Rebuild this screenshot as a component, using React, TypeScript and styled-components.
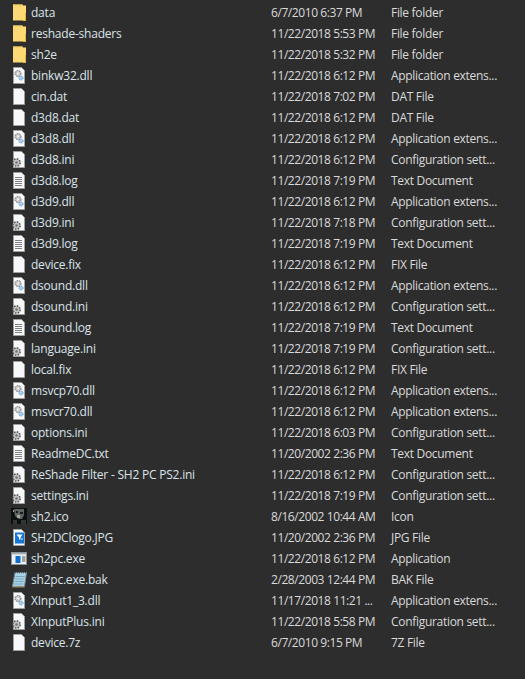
import { createGlobalStyle } from 'styled-components'
import styled from 'styled-components'

const GlobalStyle = createGlobalStyle`
  html, body {
    margin: 0;
    padding: 0;
    background: #2d2d2d;
  }
`

const List = styled.div`
  width: 525px;
  height: 679px;
  padding-top: 2px;
  box-sizing: border-box;
  background: #2d2d2d;
  overflow: hidden;
  font-family: 'Open Sans', 'Noto Sans', sans-serif;
  font-size: 12px;
  color: #dcdcdc;
`

const Row = styled.div`
  display: grid;
  grid-template-columns: 271px 120px 1fr;
  height: 21px;
  align-items: center;
  white-space: nowrap;
`

const NameCell = styled.div`
  display: flex;
  align-items: center;
  padding-left: 11px;
`

const IconBox = styled.div`
  width: 20px;
  height: 18px;
  flex: none;
  svg {
    display: block;
  }
`

const Name = styled.span`
  color: #dbe3ea;
  letter-spacing: -0.22px;
`

const Detail = styled.div<{ $spacing: string }>`
  color: #dadada;
  letter-spacing: ${(p) => p.$spacing};
`

type Kind = 'folder' | 'blank' | 'dll' | 'ini' | 'log' | 'ico' | 'jpg' | 'exe' | 'bak'

const Page = () => <path d="M2.5 .5h8l3 3v13h-11z" fill="#f7f8fa" stroke="#a0a0a0" strokeWidth="1" />

function FileIcon({ kind }: { kind: Kind }) {
  return (
    <svg width="18" height="18" viewBox="0 0 18 18">
      {kind === 'folder' && (
        <>
          <path d="M2 .5h9.5l.5 1h3v15H2z" fill="#fdd976" />
          <path d="M15 9v8h-3v-1h2V9z" fill="#e3b23a" />
          <path d="M2 .5h9.5v1H2z" fill="#efc65c" />
        </>
      )}
      {kind === 'blank' && <Page />}
      {kind === 'dll' && (
        <>
          <Page />
          <circle cx="7" cy="6.5" r="3" fill="#c8c8c8" stroke="#6f6f6f" strokeDasharray="1.5 1" />
          <circle cx="7" cy="6.5" r="1" fill="#f7f8fa" />
          <circle cx="10" cy="11" r="2" fill="#a8d0ee" stroke="#5b9bd0" strokeDasharray="1.2 .8" />
        </>
      )}
      {kind === 'ini' && (
        <>
          <Page />
          <circle cx="5.5" cy="11.5" r="3.6" fill="#c4c4c4" stroke="#5a5a5a" strokeWidth="1.6" strokeDasharray="1.6 1.2" />
          <circle cx="5.5" cy="11.5" r="1.2" fill="#6e6e6e" />
        </>
      )}
      {kind === 'log' && (
        <>
          <Page />
          <path d="M4 5.5h7M4 7.5h7M4 9.5h7M4 11.5h7M4 13.5h7" stroke="#7f7f7f" strokeWidth="1" />
        </>
      )}
      {kind === 'ico' && (
        <>
          <rect x="0" y="0" width="16" height="16" fill="#0c0f10" />
          <path d="M3 1h10v6l-2 4H8L4 8z" fill="#5d6461" />
          <path d="M5 3h2v2H5zM9 4h3v2H9z" fill="#1a1d1c" />
          <path d="M6 7h3v3H6zM2 2h1v2H2z" fill="#a4a8a4" />
          <path d="M2 12h4v4H2zM10 12h5v4h-5z" fill="#323633" />
        </>
      )}
      {kind === 'jpg' && (
        <>
          <Page />
          <rect x="4" y="3.5" width="9" height="11" fill="#1277d6" />
          <path d="M5.5 5.5h6L9.5 8.5v2h-1.5V8.5z" fill="#fff" />
          <circle cx="11" cy="10" r=".8" fill="#fff" />
        </>
      )}
      {kind === 'exe' && (
        <>
          <rect x=".5" y="2.5" width="15" height="12" fill="#eef1f4" stroke="#8d9298" strokeWidth="1" />
          <path d="M1 3h14v1.5H1z" fill="#a9b4bf" />
          <rect x="4.5" y="6" width="5" height="7" fill="#0f6fd0" />
          <path d="M11 7h3.5M11 9h3.5M11 11h3.5" stroke="#555" strokeWidth="1" />
        </>
      )}
      {kind === 'bak' && (
        <>
          <path d="M4 1.5h11.5l-2 14H1.5z" fill="#a9d3e6" stroke="#6f8a96" strokeWidth="1" />
          <path d="M4.5 5.5h9M4 8h9M3.6 10.5h9M3.2 13h9" stroke="#7fa7bb" strokeWidth="1" />
          <path d="M4 1.5h11" stroke="#3d4b52" strokeWidth="1.4" strokeDasharray="1 1" />
          <path d="M1.5 16h12" stroke="#a88f5a" strokeWidth="1" />
        </>
      )}
    </svg>
  )
}

const APP = 'Application extens...'
const CONF = 'Configuration sett...'
const TXT = 'Text Document'

const files: [string, Kind, string, string][] = [
  ['data', 'folder', '6/7/2010 6:37 PM', 'File folder'],
  ['reshade-shaders', 'folder', '11/22/2018 5:53 PM', 'File folder'],
  ['sh2e', 'folder', '11/22/2018 5:32 PM', 'File folder'],
  ['binkw32.dll', 'dll', '11/22/2018 6:12 PM', APP],
  ['cin.dat', 'blank', '11/22/2018 7:02 PM', 'DAT File'],
  ['d3d8.dat', 'blank', '11/22/2018 6:12 PM', 'DAT File'],
  ['d3d8.dll', 'dll', '11/22/2018 6:12 PM', APP],
  ['d3d8.ini', 'ini', '11/22/2018 6:12 PM', CONF],
  ['d3d8.log', 'log', '11/22/2018 7:19 PM', TXT],
  ['d3d9.dll', 'dll', '11/22/2018 6:12 PM', APP],
  ['d3d9.ini', 'ini', '11/22/2018 7:18 PM', CONF],
  ['d3d9.log', 'log', '11/22/2018 7:19 PM', TXT],
  ['device.fix', 'blank', '11/22/2018 6:12 PM', 'FIX File'],
  ['dsound.dll', 'dll', '11/22/2018 6:12 PM', APP],
  ['dsound.ini', 'ini', '11/22/2018 6:12 PM', CONF],
  ['dsound.log', 'log', '11/22/2018 7:19 PM', TXT],
  ['language.ini', 'ini', '11/22/2018 7:19 PM', CONF],
  ['local.fix', 'blank', '11/22/2018 6:12 PM', 'FIX File'],
  ['msvcp70.dll', 'dll', '11/22/2018 6:12 PM', APP],
  ['msvcr70.dll', 'dll', '11/22/2018 6:12 PM', APP],
  ['options.ini', 'ini', '11/22/2018 6:03 PM', CONF],
  ['ReadmeDC.txt', 'log', '11/20/2002 2:36 PM', TXT],
  ['ReShade Filter - SH2 PC PS2.ini', 'ini', '11/22/2018 6:12 PM', CONF],
  ['settings.ini', 'ini', '11/22/2018 7:19 PM', CONF],
  ['sh2.ico', 'ico', '8/16/2002 10:44 AM', 'Icon'],
  ['SH2DClogo.JPG', 'jpg', '11/20/2002 2:36 PM', 'JPG File'],
  ['sh2pc.exe', 'exe', '11/22/2018 6:12 PM', 'Application'],
  ['sh2pc.exe.bak', 'bak', '2/28/2003 12:44 PM', 'BAK File'],
  ['XInput1_3.dll', 'dll', '11/17/2018 11:21 ...', APP],
  ['XInputPlus.ini', 'ini', '11/22/2018 5:58 PM', CONF],
  ['device.7z', 'blank', '6/7/2010 9:15 PM', '7Z File'],
]

export default function App() {
  return (
    <>
      <GlobalStyle />
      <List>
        {files.map(([name, kind, date, type]) => (
          <Row key={name}>
            <NameCell>
              <IconBox>
                <FileIcon kind={kind} />
              </IconBox>
              <Name>{name}</Name>
            </NameCell>
            <Detail $spacing="-0.42px">{date}</Detail>
            <Detail $spacing="-0.3px">{type}</Detail>
          </Row>
        ))}
      </List>
    </>
  )
}
